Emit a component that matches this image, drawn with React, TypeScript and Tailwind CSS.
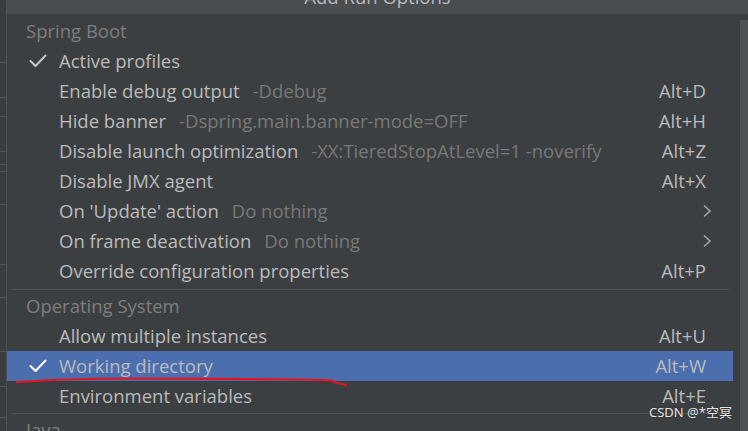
import React from "react";

type Row = {
  label: string;
  hint?: string;
  shortcut?: string;
  checked?: boolean;
  sub?: boolean;
  selected?: boolean;
};

const group1: Row[] = [
  { label: "Active profiles", checked: true },
  { label: "Enable debug output", hint: "-Ddebug", shortcut: "Alt+D" },
  { label: "Hide banner", hint: "-Dspring.main.banner-mode=OFF", shortcut: "Alt+H" },
  { label: "Disable launch optimization", hint: "-XX:TieredStopAtLevel=1 -noverify", shortcut: "Alt+Z" },
  { label: "Disable JMX agent", shortcut: "Alt+X" },
  { label: "On 'Update' action", hint: "Do nothing", sub: true },
  { label: "On frame deactivation", hint: "Do nothing", sub: true },
  { label: "Override configuration properties", shortcut: "Alt+P" },
];

const group2: Row[] = [
  { label: "Allow multiple instances", shortcut: "Alt+U" },
  { label: "Working directory", shortcut: "Alt+W", checked: true, selected: true },
  { label: "Environment variables", shortcut: "Alt+E" },
];

function Check({ white }: { white?: boolean }) {
  return (
    <svg width="18" height="14" viewBox="0 0 18 14" className="absolute left-[22px] top-[8px]">
      <polyline
        points="1.5,7 6.5,12 16.5,1.5"
        fill="none"
        stroke={white ? "#ffffff" : "#c8c8c8"}
        strokeWidth="2"
        strokeLinecap="round"
        strokeLinejoin="round"
      />
    </svg>
  );
}

function Item({ r }: { r: Row }) {
  return (
    <div
      className={`relative h-[30px] flex items-center pl-[52px] pr-[27px] ${
        r.selected ? "bg-[#4b6eaf]" : ""
      }`}
    >
      {r.checked && <Check white={r.selected} />}
      <span className="text-[#bbbbbb] whitespace-nowrap">{r.label}</span>
      {r.hint && <span className="ml-[13px] text-[#787878] whitespace-nowrap">{r.hint}</span>}
      <span className="flex-1" />
      {r.shortcut && <span className="text-[#bbbbbb] whitespace-nowrap">{r.shortcut}</span>}
      {r.sub && (
        <svg width="10" height="14" viewBox="0 0 10 14" className="mr-[-6px]">
          <polyline points="2,1.5 8,7 2,12.5" fill="none" stroke="#a8a8a8" strokeWidth="1.6" />
        </svg>
      )}
    </div>
  );
}

function Header({ text }: { text: string }) {
  return (
    <div className="h-[30px] flex items-center pl-[19px] text-[#7e7e7e]">{text}</div>
  );
}

export default function App() {
  return (
    <div
      className="w-[748px] h-[431px] overflow-hidden flex bg-[#3c3f41] text-[18.5px]"
      style={{ fontFamily: '"Open Sans", "Noto Sans", "Noto Sans CJK SC", sans-serif' }}
    >
      {/* left strip */}
      <div className="w-[7px] shrink-0 bg-[#3a3d3f] border-r border-[#4e5052] flex flex-col">
        {[63, 35, 19, 35, 13, 7, 33, 60, 33, 54, 35, 31].map((h, i) => (
          <div key={i} className="border-b border-[#515355] shrink-0" style={{ height: h }} />
        ))}
      </div>
      <div className="flex-1 flex flex-col relative">
        {/* title bar */}
        <div className="h-[14px] bg-[#4a4d50] overflow-hidden relative shrink-0">
          <div className="absolute left-0 right-0 -top-[15px] text-center text-[#bbbbbb] leading-[24px]">
            Add Run Options
          </div>
        </div>
        <div className="flex flex-1">
          <div className="w-[726px] pt-[2px]">
            <Header text="Spring Boot" />
            {group1.map((r, i) => (
              <Item key={i} r={r} />
            ))}
            <div className="pt-[3px] pb-[1px] pl-[5px] pr-[4px]">
              <div className="h-[1px] bg-[#515355]" />
            </div>
            <Header text="Operating System" />
            {group2.map((r, i) => (
              <Item key={i} r={r} />
            ))}
            <div className="pt-[2px] pb-[1px] pl-[5px] pr-[4px]">
              <div className="h-[1px] bg-[#515355]" />
            </div>
            <Header text="Java" />
          </div>
          <div className="w-[7px]" />
          <div className="w-[8px] mt-[6px] bg-[#4f5254]" />
        </div>
        {/* red underline */}
        <svg
          className="absolute left-0 top-[370px]"
          width="350"
          height="20"
          viewBox="0 0 350 20"
        >
          <path
            d="M10 12 C 40 10, 80 8.5, 130 8.5 S 240 9, 290 9.5 S 320 11, 330 13 L 339 15"
            fill="none"
            stroke="#e8141c"
            strokeWidth="2.2"
            strokeLinecap="round"
          />
        </svg>
        {/* watermark */}
        <div
          className="absolute left-[642px] top-[403px] text-[13px] text-[#e6e6e6] whitespace-nowrap"
          style={{ textShadow: "0 0 2px #222", fontFamily: '"Noto Sans", "Noto Sans CJK SC", sans-serif' }}
        >
          CSDN @*空冥
        </div>
      </div>
    </div>
  );
}
